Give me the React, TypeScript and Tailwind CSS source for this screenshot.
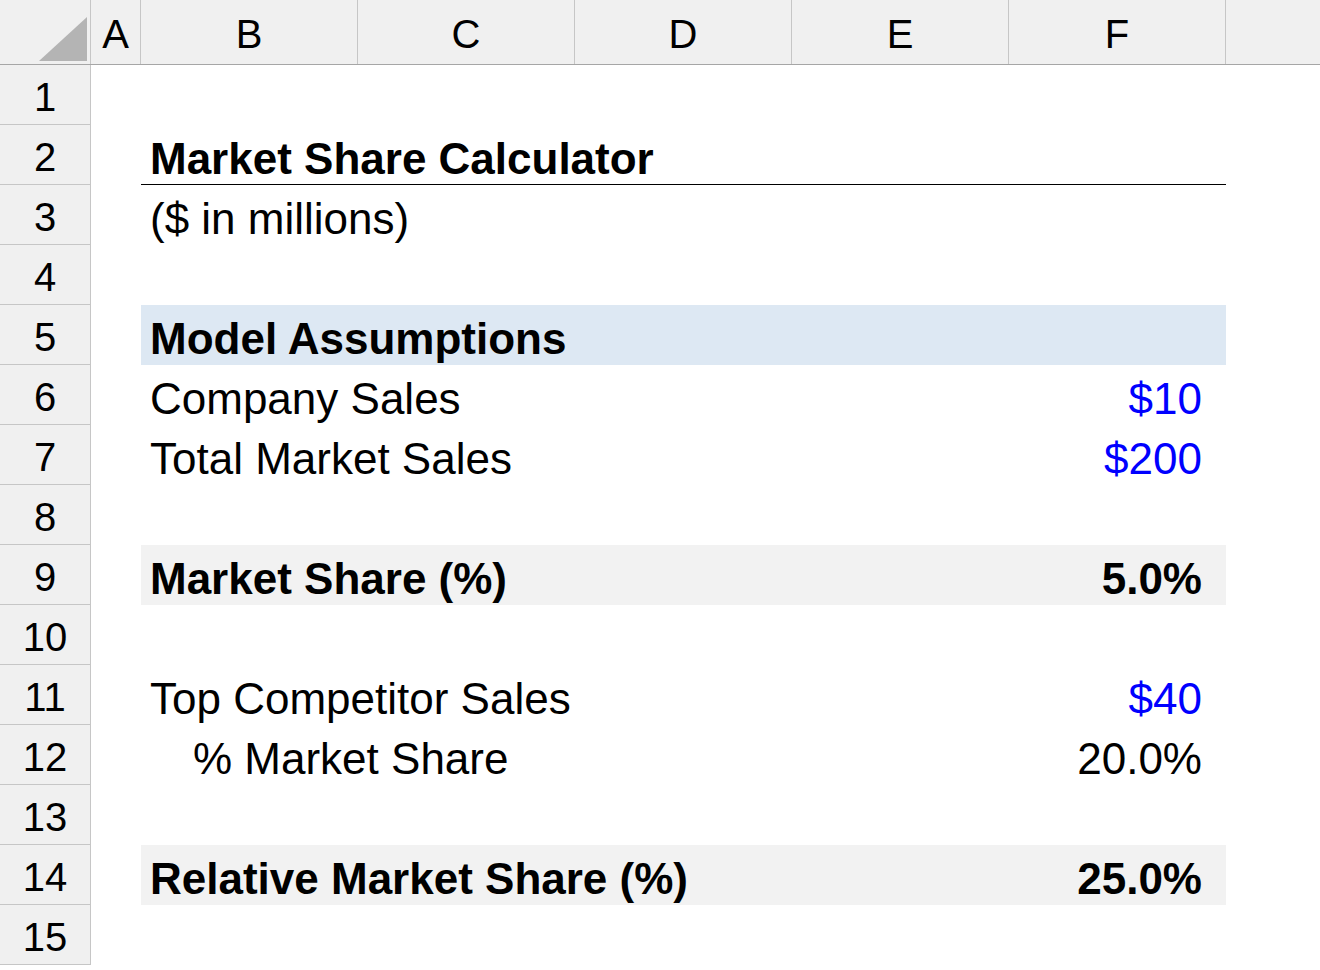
const cols = ['B', 'C', 'D', 'E', 'F'];

type Row = { label?: string; value?: string; bold?: boolean; blue?: boolean; fill?: string; indent?: boolean; underline?: boolean };

const rows: Row[] = [
  {},
  { label: 'Market Share Calculator', bold: true, underline: true },
  { label: '($ in millions)' },
  {},
  { label: 'Model Assumptions', bold: true, fill: 'bg-[#dde8f3]' },
  { label: 'Company Sales', value: '$10', blue: true },
  { label: 'Total Market Sales', value: '$200', blue: true },
  {},
  { label: 'Market Share (%)', value: '5.0%', bold: true, fill: 'bg-[#f2f2f2]' },
  {},
  { label: 'Top Competitor Sales', value: '$40', blue: true },
  { label: '% Market Share', value: '20.0%', indent: true },
  {},
  { label: 'Relative Market Share (%)', value: '25.0%', bold: true, fill: 'bg-[#f2f2f2]' },
  {},
];

export default function App() {
  return (
    <div className="w-[1320px] h-[970px] overflow-hidden bg-white text-black" style={{ fontFamily: '"Liberation Sans", Arial, sans-serif' }}>
      <div className="flex h-[65px] bg-[#f0f0f0] border-b border-[#a6a6a6]">
        <div className="w-[91px] shrink-0 border-r border-[#c6c6c6] flex items-end justify-end p-[3px]">
          <svg width="48" height="44" viewBox="0 0 48 44"><polygon points="48,0 48,44 0,44" fill="#b4b4b4" /></svg>
        </div>
        <div className="w-[50px] shrink-0 border-r border-[#c6c6c6] flex items-center justify-center text-[40px] leading-none pt-1">A</div>
        {cols.map((c) => (
          <div key={c} className="w-[217px] shrink-0 border-r border-[#c6c6c6] flex items-center justify-center text-[40px] leading-none pt-1">{c}</div>
        ))}
        <div className="flex-1" />
      </div>
      {rows.map((r, i) => (
        <div key={i} className="flex h-[60px]">
          <div className="w-[91px] shrink-0 bg-[#f0f0f0] border-r border-b border-[#c6c6c6] flex items-center justify-center text-[40px] leading-none pt-1">{i + 1}</div>
          <div className="w-[50px] shrink-0" />
          <div className={`w-[1085px] shrink-0 flex items-center justify-between pl-[9px] pr-[24px] text-[44px] leading-none pt-2 ${r.fill ?? ''} ${r.underline ? 'border-b border-black' : ''} ${r.bold ? 'font-bold' : ''}`}>
            <span className={r.indent ? 'pl-[43px]' : ''}>{r.label}</span>
            <span className={r.blue ? 'text-[#0000ff]' : ''}>{r.value}</span>
          </div>
          <div className="flex-1" />
        </div>
      ))}
    </div>
  );
}
